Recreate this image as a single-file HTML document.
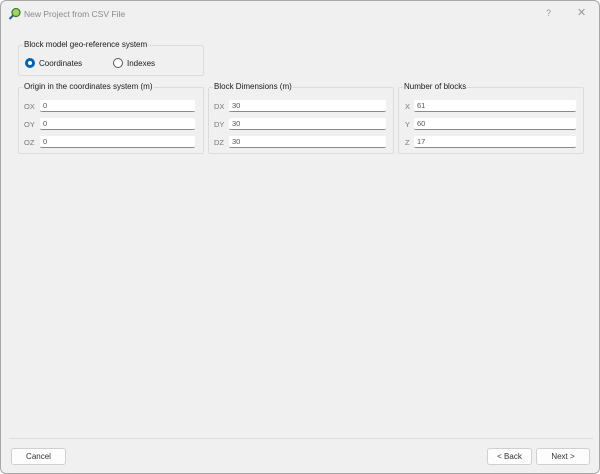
<!DOCTYPE html>
<html><head><style>
*{box-sizing:border-box;margin:0;padding:0}
body{width:600px;height:474px;background:#fff;font-family:"Liberation Sans",sans-serif;font-size:8px;color:#1a1a1a;overflow:hidden;position:relative}
.win{position:absolute;left:0;top:0;width:600px;height:474px;border:1px solid #a8a8a8;border-radius:6px;background:#f0f0f0}
.abs{position:absolute}
.grp{position:absolute;border:1px solid #dcdcdc;border-radius:2px}
.lbl{position:absolute;background:#f0f0f0;padding:0 1px;font-size:8px;color:#1a1a1a}
.in{position:absolute;height:12px;background:#fff;border-bottom:1px solid #8a8a8a;border-radius:2px;font-size:7.5px;color:#555;padding:2px 0 0 3px;line-height:8px}
.k{position:absolute;font-size:7.5px;color:#777}
.btn{position:absolute;height:17px;background:#fdfdfd;border:1px solid #d0d0d0;border-radius:3px;font-size:8px;color:#333;text-align:center;line-height:15px}
</style></head><body>
<div class="win">
<svg class="abs" style="left:7px;top:6px" width="14" height="14" viewBox="0 0 14 14"><circle cx="8" cy="5.5" r="4" fill="#9fd36a" stroke="#3f7f2a" stroke-width="1.3"/><line x1="5" y1="8.5" x2="1.5" y2="12" stroke="#2f5f8a" stroke-width="2"/></svg>
<div class="abs" style="left:23px;top:8px;font-size:8.5px;color:#8a8a8a">New Project from CSV File</div>
<div class="abs" style="left:545px;top:7px;font-size:9px;color:#999">?</div>
<div class="abs" style="left:576px;top:5px;font-size:11px;color:#999">✕</div>

<div class="grp" style="left:17px;top:44px;width:186px;height:31px"></div>
<div class="lbl" style="left:22px;top:39px">Block model geo-reference system</div>
<div class="abs" style="left:24px;top:57px;width:10px;height:10px;border-radius:50%;background:#0063b1"><div class="abs" style="left:3px;top:3px;width:4px;height:4px;border-radius:50%;background:#fff"></div></div>
<div class="abs" style="left:38px;top:58px">Coordinates</div>
<div class="abs" style="left:112px;top:57px;width:10px;height:10px;border-radius:50%;border:1px solid #555;background:#fff"></div>
<div class="abs" style="left:126px;top:58px">Indexes</div>

<div class="grp" style="left:17px;top:86px;width:186px;height:67px"></div>
<div class="lbl" style="left:22px;top:81px">Origin in the coordinates system (m)</div>
<div class="k" style="left:23px;top:101px">OX</div><div class="in" style="left:39px;top:99px;width:155px">0</div>
<div class="k" style="left:23px;top:119px">OY</div><div class="in" style="left:39px;top:117px;width:155px">0</div>
<div class="k" style="left:23px;top:137px">OZ</div><div class="in" style="left:39px;top:135px;width:155px">0</div>

<div class="grp" style="left:207px;top:86px;width:186px;height:67px"></div>
<div class="lbl" style="left:212px;top:81px">Block Dimensions (m)</div>
<div class="k" style="left:213px;top:101px">DX</div><div class="in" style="left:228px;top:99px;width:157px">30</div>
<div class="k" style="left:213px;top:119px">DY</div><div class="in" style="left:228px;top:117px;width:157px">30</div>
<div class="k" style="left:213px;top:137px">DZ</div><div class="in" style="left:228px;top:135px;width:157px">30</div>

<div class="grp" style="left:397px;top:86px;width:186px;height:67px"></div>
<div class="lbl" style="left:402px;top:81px">Number of blocks</div>
<div class="k" style="left:404px;top:101px">X</div><div class="in" style="left:413px;top:99px;width:162px">61</div>
<div class="k" style="left:404px;top:119px">Y</div><div class="in" style="left:413px;top:117px;width:162px">60</div>
<div class="k" style="left:404px;top:137px">Z</div><div class="in" style="left:413px;top:135px;width:162px">17</div>

<div class="abs" style="left:8px;top:437px;width:584px;height:1px;background:#dcdcdc"></div>
<div class="btn" style="left:10px;top:447px;width:55px">Cancel</div>
<div class="btn" style="left:486px;top:447px;width:45px">&lt; Back</div>
<div class="btn" style="left:535px;top:447px;width:54px">Next &gt;</div>
</div>
</body></html>
